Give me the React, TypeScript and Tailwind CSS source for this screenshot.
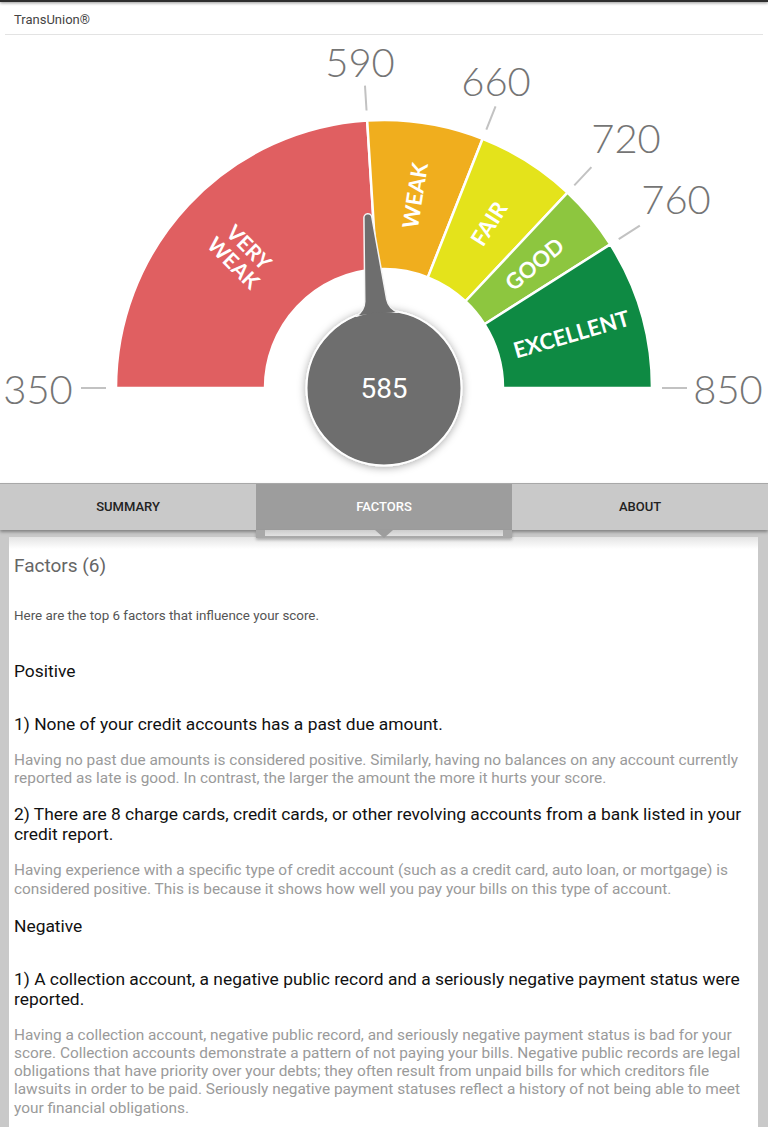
import React from "react";

const CX = 384;
const CY = 388;
const R_OUT = 268;
const R_IN = 119;

// score -> math angle (degrees), 350 on the left, 850 on the right
const ang = (s: number) => 180 - ((s - 350) / 500) * 180;

const pt = (rad: number, a: number): [number, number] => {
  const t = (a * Math.PI) / 180;
  return [CX + rad * Math.cos(t), CY - rad * Math.sin(t)];
};

const sector = (s1: number, s2: number) => {
  const a1 = ang(s1);
  const a2 = ang(s2);
  const [x1, y1] = pt(R_OUT, a1);
  const [x2, y2] = pt(R_OUT, a2);
  const [x3, y3] = pt(R_IN, a2);
  const [x4, y4] = pt(R_IN, a1);
  return `M ${x1} ${y1} A ${R_OUT} ${R_OUT} 0 0 1 ${x2} ${y2} L ${x3} ${y3} A ${R_IN} ${R_IN} 0 0 0 ${x4} ${y4} Z`;
};

const segments = [
  { from: 350, to: 590, color: "#e05f61" },
  { from: 590, to: 660, color: "#f0ae1e" },
  { from: 660, to: 720, color: "#e4e31b" },
  { from: 720, to: 760, color: "#8dc63f" },
  { from: 760, to: 850, color: "#0e8a43" },
];

const ticks = [
  { score: 350, x: 38, y: 389 },
  { score: 590, x: 360, y: 62 },
  { score: 660, x: 496, y: 81 },
  { score: 720, x: 626, y: 138 },
  { score: 760, x: 676, y: 199 },
  { score: 850, x: 728, y: 389 },
];

const labels = [
  { text: "WEAK", mid: 625 },
  { text: "FAIR", mid: 690 },
  { text: "GOOD", mid: 740 },
  { text: "EXCELLENT", mid: 805 },
];

const Gauge = () => {
  const score = 585;
  const needleRot = 90 - ang(score);
  const vw = pt(195, ang(470));

  return (
    <svg width={768} height={448} viewBox="0 35 768 448" className="block">
      <defs>
        <filter id="dial-shadow" x="-30%" y="-30%" width="160%" height="160%">
          <feDropShadow dx="0" dy="1" stdDeviation="4" floodColor="#000" floodOpacity="0.35" />
        </filter>
      </defs>

      {segments.map((s) => (
        <path key={s.from} d={sector(s.from, s.to)} fill={s.color} stroke="#fff" strokeWidth={2.5} strokeLinejoin="round" />
      ))}

      {ticks.map((t) => {
        const a = ang(t.score);
        const [x1, y1] = pt(278, a);
        const [x2, y2] = pt(303, a);
        return (
          <g key={t.score}>
            <line x1={x1} y1={y1} x2={x2} y2={y2} stroke="#c2c2c2" strokeWidth={2} />
            <text
              x={t.x}
              y={t.y}
              textAnchor="middle"
              dominantBaseline="central"
              fill="#757575"
              fontSize={40}
              fontWeight={300}
              fontFamily="Lato, 'Open Sans', sans-serif"
            >
              {t.score}
            </text>
          </g>
        );
      })}

      <g
        transform={`translate(${vw[0]} ${vw[1]}) rotate(45)`}
        fill="#fff"
        fontSize={21}
        fontWeight={700}
        fontFamily="Lato, 'Open Sans', sans-serif"
        textAnchor="middle"
        dominantBaseline="central"
      >
        <text x={0} y={-11}>VERY</text>
        <text x={0} y={11}>WEAK</text>
      </g>

      {labels.map((l) => {
        const a = ang(l.mid);
        const [x, y] = pt(195, a);
        return (
          <text
            key={l.mid}
            transform={`translate(${x} ${y}) rotate(${-a})`}
            textAnchor="middle"
            dominantBaseline="central"
            fill="#fff"
            fontSize={22}
            fontWeight={700}
            fontFamily="Lato, 'Open Sans', sans-serif"
          >
            {l.text}
          </text>
        );
      })}

      <circle cx={CX} cy={CY} r={77.5} fill="#6e6e6e" stroke="#fff" strokeWidth={2} filter="url(#dial-shadow)" />
      <path
        transform={`translate(${CX} ${CY}) rotate(${needleRot})`}
        d="M -4 -171 A 4 4 0 0 1 4 -171 L 11 -88 Q 12 -79 21 -74 L -21 -74 Q -12 -79 -11 -88 Z"
        fill="#6e6e6e"
        stroke="#f4f4f4"
        strokeWidth={1.5}
        strokeLinejoin="round"
      />
      <circle cx={CX} cy={CY} r={76} fill="#6e6e6e" />
      <text
        x={CX}
        y={CY}
        textAnchor="middle"
        dominantBaseline="central"
        fill="#fff"
        fontSize={28}
        fontFamily="Roboto, sans-serif"
      >
        {score}
      </text>
    </svg>
  );
};

const tabs = ["SUMMARY", "FACTORS", "ABOUT"];

const TabBar = () => (
  <div className="relative z-10 grid h-[47px] grid-cols-3 border-t border-[#a8a8a8] bg-[#c9c9c9] shadow-[0_2px_3px_rgba(0,0,0,0.35)]">
    {tabs.map((t) => {
      const active = t === "FACTORS";
      return (
        <div
          key={t}
          className={
            active
              ? "relative flex items-center justify-center bg-[#9d9d9d] text-[13px] font-medium text-white"
              : "flex items-center justify-center text-[13px] font-medium text-[#222]"
          }
        >
          {t}
          {active && (
            <div className="absolute left-0 right-0 top-full h-[8px] bg-[#a9a9a9] px-[9px] shadow-[0_2px_3px_rgba(0,0,0,0.25)]">
              <div className="h-[6px] bg-gradient-to-b from-[#cdcdcd] to-[#e2e2e2]" />
              <div className="absolute left-1/2 top-0 h-0 w-0 -translate-x-1/2 border-l-[9px] border-r-[9px] border-t-[8px] border-l-transparent border-r-transparent border-t-[#9d9d9d]" />
            </div>
          )}
        </div>
      );
    })}
  </div>
);

type Factor = { title: string; body: string };

const positive: Factor[] = [
  {
    title: "1) None of your credit accounts has a past due amount.",
    body: "Having no past due amounts is considered positive. Similarly, having no balances on any account currently reported as late is good. In contrast, the larger the amount the more it hurts your score.",
  },
  {
    title: "2) There are 8 charge cards, credit cards, or other revolving accounts from a bank listed in your credit report.",
    body: "Having experience with a specific type of credit account (such as a credit card, auto loan, or mortgage) is considered positive. This is because it shows how well you pay your bills on this type of account.",
  },
];

const negative: Factor[] = [
  {
    title: "1) A collection account, a negative public record and a seriously negative payment status were reported.",
    body: "Having a collection account, negative public record, and seriously negative payment status is bad for your score. Collection accounts demonstrate a pattern of not paying your bills. Negative public records are legal obligations that have priority over your debts; they often result from unpaid bills for which creditors file lawsuits in order to be paid. Seriously negative payment statuses reflect a history of not being able to meet your financial obligations.",
  },
];

const FactorItem = ({ f, first }: { f: Factor; first: boolean }) => (
  <div>
    <p className={`${first ? "mt-[32px]" : "mt-[17px]"} text-[17.4px] leading-[20px] text-[#111]`}>{f.title}</p>
    <p className="mt-[17px] text-[15.4px] leading-[18.2px] text-[#9a9a9a]">{f.body}</p>
  </div>
);

const App = () => {
  return (
    <div className="min-h-[1127px] w-[768px] overflow-hidden bg-white font-['Roboto',sans-serif]">
      <div className="h-[2px] bg-[#2f2f2f] shadow-[0_1px_3px_rgba(0,0,0,0.5)]" />
      <div className="h-[32px] px-[14px] pt-[10px] text-[13px] leading-[16px] text-[#444]">TransUnion®</div>
      <div className="mx-[5px] h-px bg-[#e3e3e3]" />

      <Gauge />

      <TabBar />

      <div className="min-h-[597px] bg-[#c9c9c9] pl-[9px] pr-[10px] pt-[7px]">
        <div className="min-h-[590px] bg-white">
          <div className="h-[12px] bg-gradient-to-b from-[#e4e4e4] to-white" />
          <div className="px-[5px] pb-[20px] pt-[5px]">
            <p className="text-[19px] leading-[24px] text-[#666]">Factors (6)</p>
            <p className="mt-[29px] text-[13.4px] leading-[18px] text-[#555]">
              Here are the top 6 factors that influence your score.
            </p>
            <p className="mt-[35px] text-[17.4px] leading-[22px] text-[#111]">Positive</p>
            {positive.map((f, i) => (
              <FactorItem key={f.title} f={f} first={i === 0} />
            ))}
            <p className="mt-[17px] text-[17.4px] leading-[22px] text-[#111]">Negative</p>
            {negative.map((f, i) => (
              <FactorItem key={f.title} f={f} first={i === 0} />
            ))}
          </div>
        </div>
      </div>
    </div>
  );
};

export default App;
